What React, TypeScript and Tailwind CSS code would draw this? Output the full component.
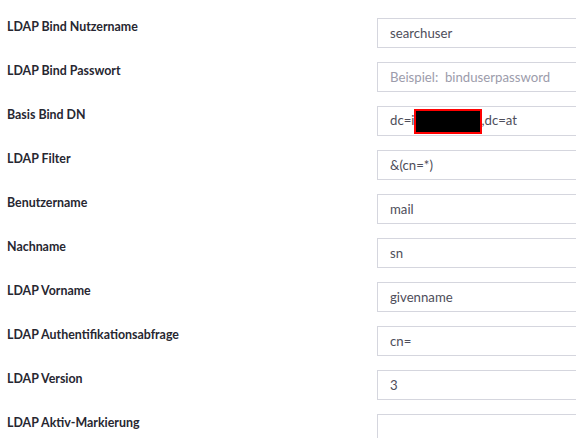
const fields: { label: string; value?: string; placeholder?: string; redacted?: boolean }[] = [
  { label: 'LDAP Bind Nutzername', value: 'searchuser' },
  { label: 'LDAP Bind Passwort', placeholder: 'Beispiel:  binduserpassword' },
  { label: 'Basis Bind DN', redacted: true },
  { label: 'LDAP Filter', value: '&(cn=*)' },
  { label: 'Benutzername', value: 'mail' },
  { label: 'Nachname', value: 'sn' },
  { label: 'LDAP Vorname', value: 'givenname' },
  { label: 'LDAP Authentifikationsabfrage', value: 'cn=' },
  { label: 'LDAP Version', value: '3' },
  { label: 'LDAP Aktiv-Markierung', value: '' },
]

export default function App() {
  return (
    <div className="w-[576px] h-[438px] overflow-hidden bg-white font-['Lato','Liberation_Sans',sans-serif]">
      <div className="flex flex-col gap-[14px] pt-[18px] pl-[7px]">
        {fields.map((f) => (
          <div key={f.label} className="flex items-start h-[30px]">
            <label className="w-[370px] shrink-0 pt-[1px] text-[12.4px] leading-[16px] font-bold text-[#272731]">
              {f.label}
            </label>
            {f.redacted ? (
              <div className="w-[230px] shrink-0 h-[30px] border border-[#d5d6de] bg-white px-[12px] flex items-center text-[13.2px] text-[#4e4e5a] whitespace-nowrap">
                <span>dc=i</span>
                <span className="inline-block w-[68px] h-[25px] -ml-[1px] bg-black border-2 border-[#ff0000]" />
                <span>,dc=at</span>
              </div>
            ) : (
              <input
                readOnly
                value={f.value ?? ''}
                placeholder={f.placeholder}
                className="w-[230px] shrink-0 h-[30px] border border-[#d5d6de] bg-white px-[12px] text-[13.2px] text-[#4e4e5a] placeholder:text-[#9c9cab] outline-none"
              />
            )}
          </div>
        ))}
      </div>
    </div>
  )
}
